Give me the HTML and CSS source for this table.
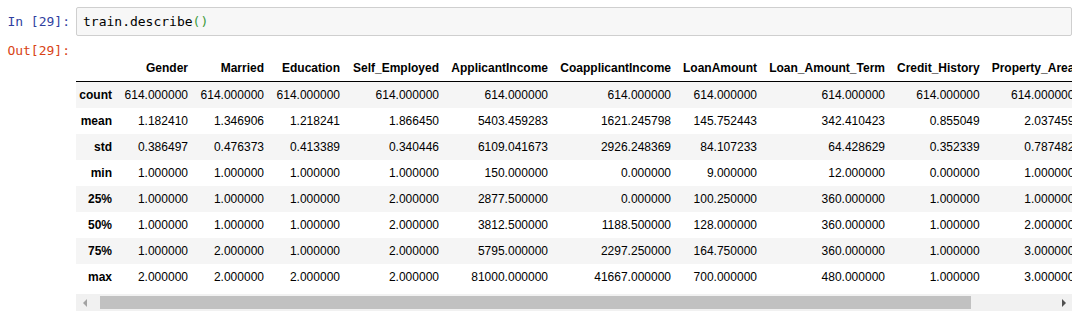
FILE: index.html
```html
<!DOCTYPE html>
<html lang="en">
<head>
    <meta charset="UTF-8">
    <title>train.describe()</title>
    <link rel="stylesheet" href="styles.css">
</head>
<body>

<div class="cell">
    <!-- Input -->
    <div class="input-row">
        <div class="prompt in-prompt">In&nbsp;[29]:</div>
        <div class="input-area"><span class="code">train.describe<span class="bracket">()</span></span></div>
    </div>

    <!-- Output -->
    <div class="output-row">
        <div class="prompt out-prompt">Out[29]:</div>
        <div class="output-area">
            <div class="table-wrap">
                <table class="dataframe">
                    <colgroup>
                        <col class="col-index">
                        <col class="col-num"><col class="col-num"><col class="col-num">
                        <col class="col-self">
                        <col class="col-app">
                        <col class="col-coapp">
                        <col class="col-loan">
                        <col class="col-term">
                        <col class="col-credit">
                        <col>
                    </colgroup>
                    <thead>
                        <tr>
                            <th></th>
                            <th>Gender</th>
                            <th>Married</th>
                            <th>Education</th>
                            <th>Self_Employed</th>
                            <th>ApplicantIncome</th>
                            <th>CoapplicantIncome</th>
                            <th>LoanAmount</th>
                            <th>Loan_Amount_Term</th>
                            <th>Credit_History</th>
                            <th>Property_Area</th>
                        </tr>
                    </thead>
                    <tbody>
                        <tr><th>count</th><td>614.000000</td><td>614.000000</td><td>614.000000</td><td>614.000000</td><td>614.000000</td><td>614.000000</td><td>614.000000</td><td>614.000000</td><td>614.000000</td><td>614.000000</td></tr>
                        <tr><th>mean</th><td>1.182410</td><td>1.346906</td><td>1.218241</td><td>1.866450</td><td>5403.459283</td><td>1621.245798</td><td>145.752443</td><td>342.410423</td><td>0.855049</td><td>2.037459</td></tr>
                        <tr><th>std</th><td>0.386497</td><td>0.476373</td><td>0.413389</td><td>0.340446</td><td>6109.041673</td><td>2926.248369</td><td>84.107233</td><td>64.428629</td><td>0.352339</td><td>0.787482</td></tr>
                        <tr><th>min</th><td>1.000000</td><td>1.000000</td><td>1.000000</td><td>1.000000</td><td>150.000000</td><td>0.000000</td><td>9.000000</td><td>12.000000</td><td>0.000000</td><td>1.000000</td></tr>
                        <tr><th>25%</th><td>1.000000</td><td>1.000000</td><td>1.000000</td><td>2.000000</td><td>2877.500000</td><td>0.000000</td><td>100.250000</td><td>360.000000</td><td>1.000000</td><td>1.000000</td></tr>
                        <tr><th>50%</th><td>1.000000</td><td>1.000000</td><td>1.000000</td><td>2.000000</td><td>3812.500000</td><td>1188.500000</td><td>128.000000</td><td>360.000000</td><td>1.000000</td><td>2.000000</td></tr>
                        <tr><th>75%</th><td>1.000000</td><td>2.000000</td><td>1.000000</td><td>2.000000</td><td>5795.000000</td><td>2297.250000</td><td>164.750000</td><td>360.000000</td><td>1.000000</td><td>3.000000</td></tr>
                        <tr><th>max</th><td>2.000000</td><td>2.000000</td><td>2.000000</td><td>2.000000</td><td>81000.000000</td><td>41667.000000</td><td>700.000000</td><td>480.000000</td><td>1.000000</td><td>3.000000</td></tr>
                    </tbody>
                </table>
            </div>
            <!-- Horizontal scrollbar -->
            <div class="scrollbar">
                <div class="arrow arrow-left"></div>
                <div class="thumb"></div>
                <div class="arrow arrow-right"></div>
            </div>
        </div>
    </div>
</div>

</body>
</html>
```

FILE: styles.css
```css
body {
    margin: 0;
    background-color: #fff;
    font-family: "Liberation Sans", Arial, sans-serif;
    color: #000;
}
.cell {
    padding: 7px 12px 0 0;
}
.input-row,
.output-row {
    display: flex;
}
.prompt {
    width: 76px;
    flex-shrink: 0;
    box-sizing: border-box;
    padding-right: 6px;
    text-align: right;
    font-family: "DejaVu Sans Mono", "Liberation Mono", monospace;
    font-size: 13px;
    line-height: 17px;
}
.in-prompt {
    color: #303f9f;
    padding-top: 6px;
}
.out-prompt {
    color: #d84315;
    padding-top: 6px;
}
.input-area {
    flex: 1;
    background-color: #f7f7f7;
    border: 1px solid #cfcfcf;
    border-radius: 2px;
    padding: 5px 6px;
    font-family: "DejaVu Sans Mono", "Liberation Mono", monospace;
    font-size: 13px;
    line-height: 17px;
}
.bracket {
    color: #3c9a3c;
}
.output-area {
    flex: 1;
    min-width: 0;
    padding-top: 19px;
}
.table-wrap {
    overflow: hidden;
}
table.dataframe {
    width: max-content;
    border-collapse: collapse;
    border-spacing: 0;
    font-size: 12px;
    line-height: 14px;
    white-space: nowrap;
}
/* column widths taken from the notebook render */
.col-index { width: 42px; }
.col-num { width: 76px; }
.col-self { width: 99px; }
.col-app { width: 109px; }
.col-coapp { width: 123px; }
.col-loan { width: 86px; }
.col-term { width: 128px; }
.col-credit { width: 94px; }
table.dataframe thead {
    border-bottom: 1px solid #000;
}
table.dataframe th,
table.dataframe td {
    padding: 6px;
    text-align: right;
}
table.dataframe th {
    font-weight: bold;
}
table.dataframe tbody th {
    padding-left: 3px;
}
table.dataframe tbody tr:nth-child(odd) {
    background-color: #f5f5f5;
}
.scrollbar {
    display: flex;
    align-items: center;
    height: 17px;
    margin-top: 4px;
    background-color: #f1f1f1;
}
.arrow {
    width: 17px;
    height: 17px;
    flex-shrink: 0;
    display: flex;
    align-items: center;
    justify-content: center;
}
.arrow::before {
    content: "";
    border-top: 4px solid transparent;
    border-bottom: 4px solid transparent;
}
.arrow-left::before {
    border-right: 4px solid #a3a3a3;
}
.arrow-right {
    margin-left: auto;
}
.arrow-right::before {
    border-left: 4px solid #505050;
}
.thumb {
    width: 871px;
    height: 13px;
    margin-left: 7px;
    background-color: #c1c1c1;
}
```
